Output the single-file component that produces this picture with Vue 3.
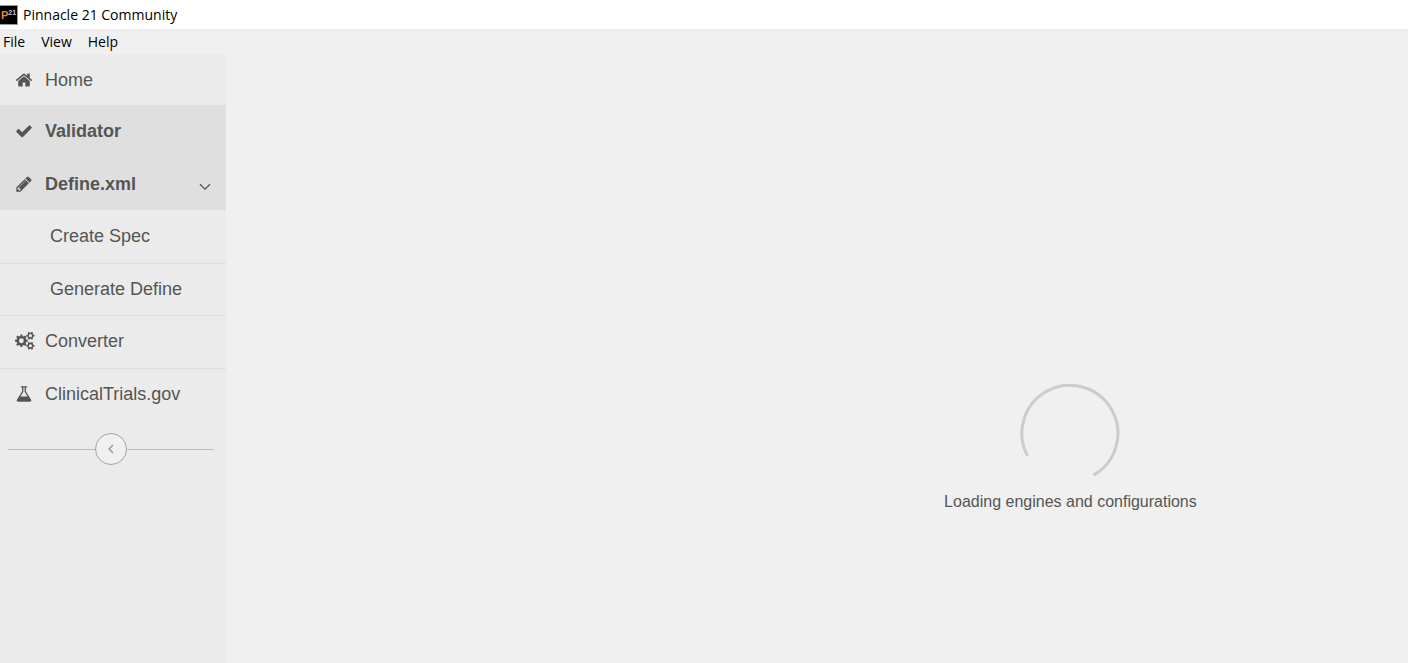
<script setup>
const menus = ['File', 'View', 'Help']

function gear(cx, cy, outer, inner, hole, teeth) {
  const step = (Math.PI * 2) / teeth
  const at = (r, a) => `${(cx + r * Math.cos(a)).toFixed(2)} ${(cy + r * Math.sin(a)).toFixed(2)}`
  let d = ''
  for (let i = 0; i < teeth; i++) {
    const a = i * step
    d += `${i ? 'L' : 'M'}${at(inner, a - step * 0.3)}L${at(outer, a - step * 0.2)}L${at(outer, a + step * 0.2)}L${at(inner, a + step * 0.3)}`
  }
  return `${d}ZM${cx - hole} ${cy}a${hole} ${hole} 0 1 0 ${hole * 2} 0a${hole} ${hole} 0 1 0 ${-hole * 2} 0Z`
}

const icons = {
  home: 'M1472 992v480q0 26-19 45t-45 19h-384v-384h-256v384h-384q-26 0-45-19t-19-45v-480q0-1 .5-3t.5-3l575-474 575 474q1 2 1 6zm223-69l-62 74q-8 9-21 11h-3q-13 0-21-7l-692-577-692 577q-12 8-24 7-13-2-21-11l-62-74q-8-10-7-23.5t11-21.5l719-599q32-26 76-26t76 26l244 204v-195q0-14 9-23t23-9h192q14 0 23 9t9 23v408l219 182q10 8 11 21.5t-7 23.5z',
  check: 'M1671 566q0 40-28 68l-724 724-136 136q-28 28-68 28t-68-28l-136-136-362-362q-28-28-28-68t28-68l136-136q28-28 68-28t68 28l294 295 656-657q28-28 68-28t68 28l136 136q28 28 28 68z',
  pencil: 'M491 1536l91-91-235-235-91 91v107h128v128h107zm523-928q0-22-22-22-10 0-17 7l-542 542q-7 7-7 17 0 22 22 22 10 0 17-7l542-542q7-7 7-17zm-54-192l416 416-832 832h-416v-416zm683 96q0 53-37 90l-166 166-416-416 166-165q36-38 90-38 53 0 91 38l235 234q37 39 37 91z',
  cogs: gear(600, 870, 640, 490, 240, 8) + gear(1500, 370, 410, 300, 160, 6) + gear(1500, 1370, 410, 300, 160, 6),
  flask: 'M1591 1448q56 89 21.5 152.5t-140.5 63.5h-1152q-106 0-140.5-63.5t21.5-152.5l503-793v-399h-64q-26 0-45-19t-19-45 19-45 45-19h512q26 0 45 19t19 45-19 45-45 19h-64v399zm-779-725l-272 429h712l-272-429-20-31v-436h-128v436z',
}

const items = [
  { label: 'Home', icon: 'home' },
  { label: 'Validator', icon: 'check', active: true },
  { label: 'Define.xml', icon: 'pencil', active: true, open: true },
  { label: 'Create Spec', sub: true },
  { label: 'Generate Define', sub: true, line: true },
  { label: 'Converter', icon: 'cogs', line: true },
  { label: 'ClinicalTrials.gov', icon: 'flask', line: true },
]
</script>

<template>
  <div class="window">
    <header class="titlebar">
      <span class="logo"><b>P</b><small>21</small></span>
      <span>Pinnacle 21 Community</span>
    </header>
    <div class="menubar">
      <button v-for="m in menus" :key="m" type="button">{{ m }}</button>
    </div>
    <div class="body">
      <aside class="sidebar">
        <nav>
          <a
            v-for="item in items"
            :key="item.label"
            href="#"
            :class="{ active: item.active, sub: item.sub, line: item.line }"
          >
            <svg v-if="item.icon" class="icon" :class="item.icon" :viewBox="item.icon === 'cogs' ? '0 0 1920 1792' : '0 0 1792 1792'" aria-hidden="true">
              <path :d="icons[item.icon]" fill="currentColor" fill-rule="evenodd" />
            </svg>
            <span class="label">{{ item.label }}</span>
            <svg v-if="item.open" class="chevron" viewBox="0 0 12 8" aria-hidden="true">
              <path d="M1 1.2 6 6.2 11 1.2" fill="none" stroke="currentColor" stroke-width="1.3" />
            </svg>
          </a>
        </nav>
        <div class="collapse">
          <button type="button" aria-label="Collapse sidebar">
            <svg viewBox="0 0 8 10" aria-hidden="true">
              <path d="M6 1 2 5l4 4" fill="none" stroke="currentColor" stroke-width="1.5" />
            </svg>
          </button>
        </div>
      </aside>
      <main>
        <div class="loader" role="status">
          <svg viewBox="0 0 100 100" aria-hidden="true">
            <path d="M7.6 72A48 48 0 1 1 73.5 91.1" fill="none" stroke="#cccccc" stroke-width="3" />
          </svg>
          <p>Loading engines and configurations</p>
        </div>
      </main>
    </div>
  </div>
</template>

<style>
body {
  background: #f0f0f0;
}
</style>

<style scoped>
.window {
  display: flex;
  flex-direction: column;
  min-height: 100vh;
  color: #555;
  background: #f0f0f0;
  font-family: "Liberation Sans", Arial, sans-serif;
}
.titlebar {
  display: flex;
  align-items: center;
  gap: 5px;
  height: 29px;
  background: #fff;
  color: #000;
  font: 14px/20px "Open Sans", "Segoe UI", sans-serif;
}
.logo {
  display: flex;
  box-sizing: border-box;
  width: 18px;
  height: 20px;
  padding-left: 1px;
  border: 1px solid #999;
  border-left: 0;
  background: #000;
  font-family: "Liberation Sans", Arial, sans-serif;
}
.logo b {
  color: #f0821e;
  font-size: 11px;
  line-height: 18px;
}
.logo small {
  color: #ccc;
  font-size: 7px;
  font-weight: 700;
  line-height: 14px;
}
.menubar {
  display: flex;
  gap: 16px;
  height: 25px;
  padding-left: 3px;
}
.menubar button {
  padding: 0;
  border: 0;
  background: none;
  color: #000;
  font: 14px/25px "Open Sans", "Segoe UI", sans-serif;
}
.body {
  display: flex;
  flex: 1;
}
.sidebar {
  flex: none;
  width: 226px;
  background: #ebebeb;
}
nav {
  display: grid;
  grid-template-rows: 51px repeat(6, 1fr);
  height: 366px;
}
nav a {
  display: flex;
  align-items: center;
  box-sizing: border-box;
  padding: 0 15px;
  color: #555;
  font-size: 18px;
  line-height: 20px;
  text-decoration: none;
}
nav a.active {
  background: #dfdfdf;
  font-weight: 700;
}
nav a.sub {
  padding-left: 50px;
}
nav a.line {
  box-shadow: inset 0 1px #dedede;
}
.icon {
  width: 18px;
  height: 18px;
  margin-right: 12px;
}
.icon.cogs {
  width: 20px;
  margin-right: 10px;
}
.label {
  flex: 1;
}
.chevron {
  width: 12px;
  height: 8px;
  margin-top: 6px;
}
.collapse {
  display: flex;
  align-items: center;
  margin: 13px 12px 0 8px;
}
.collapse::before,
.collapse::after {
  content: "";
  flex: 1;
  height: 1px;
  background: #bdbdbd;
}
.collapse button {
  display: grid;
  place-items: center;
  width: 32px;
  height: 32px;
  padding: 0;
  border: 1px solid #a3a3a3;
  border-radius: 50%;
  background: #f0f0f0;
  color: #999;
}
.collapse svg {
  width: 8px;
  height: 10px;
}
main {
  display: flex;
  flex: 1;
  align-items: center;
  justify-content: center;
  box-sizing: border-box;
  padding: 178px 0 0 36%;
}
.loader {
  text-align: center;
}
.loader svg {
  width: 100px;
  height: 100px;
}
.loader p {
  margin: 4px 0 0;
  font-size: 16px;
  line-height: 20px;
}
</style>
